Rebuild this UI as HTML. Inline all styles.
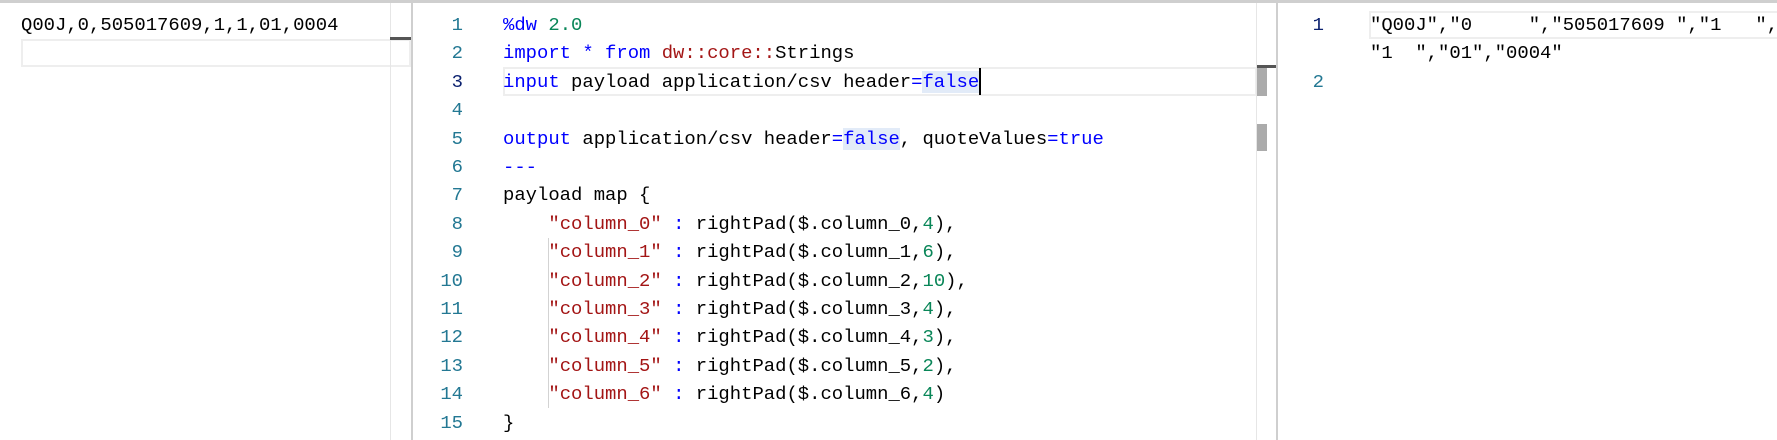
<!DOCTYPE html>
<html><head><meta charset="utf-8"><style>
*{margin:0;padding:0;box-sizing:border-box}
body{width:1777px;height:440px;overflow:hidden;background:#fff;position:relative;font-family:"Liberation Mono","DejaVu Sans Mono",monospace;font-size:18.9px;color:#000}
.a{position:absolute}
.l{position:absolute;height:28.4px;line-height:28.4px;white-space:pre}
.n{position:absolute;height:28.4px;line-height:28.4px;text-align:right;color:#237893;width:60px}
.k{color:#0000ff}.g{color:#098658}.s{color:#a31515}.h{background:#e2ebf8}
</style></head><body>
<div class="a" style="left:0;top:0;width:1777px;height:3px;background:#cfcfcf"></div>
<!-- left pane -->
<div class="l" style="left:21px;top:11px">Q00J,0,505017609,1,1,01,0004</div>
<div class="a" style="left:21px;top:39px;width:390px;height:28px;border:2px solid #eeeeee"></div>
<div class="a" style="left:390px;top:3px;width:1px;height:437px;background:#e6e6e6"></div>
<div class="a" style="left:390px;top:37px;width:21px;height:3px;background:#555"></div>
<div class="a" style="left:411px;top:3px;width:2px;height:437px;background:#cfcfcf"></div>
<!-- middle -->
<div class="a" style="left:503px;top:67px;width:754px;height:29px;border:2px solid #eeeeee"></div>
<div class="a" style="left:548px;top:238px;width:1px;height:170px;background:#d3d3d3"></div>
<div class="n" style="left:403px;top:11px">1</div>
<div class="n" style="left:403px;top:39.4px">2</div>
<div class="n" style="left:403px;top:67.8px;color:#0b216f">3</div>
<div class="n" style="left:403px;top:96.2px">4</div>
<div class="n" style="left:403px;top:124.6px">5</div>
<div class="n" style="left:403px;top:153px">6</div>
<div class="n" style="left:403px;top:181.4px">7</div>
<div class="n" style="left:403px;top:209.8px">8</div>
<div class="n" style="left:403px;top:238.2px">9</div>
<div class="n" style="left:403px;top:266.6px">10</div>
<div class="n" style="left:403px;top:295px">11</div>
<div class="n" style="left:403px;top:323.4px">12</div>
<div class="n" style="left:403px;top:351.8px">13</div>
<div class="n" style="left:403px;top:380.2px">14</div>
<div class="n" style="left:403px;top:408.6px">15</div>
<div class="l" style="left:503px;top:11px"><span class="k">%dw</span> <span class="g">2.0</span></div>
<div class="l" style="left:503px;top:39.4px"><span class="k">import * from</span> <span class="s">dw::core::</span>Strings</div>
<div class="l" style="left:503px;top:67.8px"><span class="k">input</span> payload application/csv header<span class="k">=</span><span class="k h">false</span></div>
<div class="a" style="left:979px;top:68px;width:2px;height:27px;background:#000"></div>
<div class="l" style="left:503px;top:124.6px"><span class="k">output</span> application/csv header<span class="k">=</span><span class="k h">false</span>, quoteValues<span class="k">=true</span></div>
<div class="l" style="left:503px;top:153px"><span class="k">---</span></div>
<div class="l" style="left:503px;top:181.4px">payload map {</div>
<div class="l" style="left:503px;top:209.8px">    <span class="s">"column_0"</span> <span class="k">:</span> rightPad($.column_0,<span class="g">4</span>),</div>
<div class="l" style="left:503px;top:238.2px">    <span class="s">"column_1"</span> <span class="k">:</span> rightPad($.column_1,<span class="g">6</span>),</div>
<div class="l" style="left:503px;top:266.6px">    <span class="s">"column_2"</span> <span class="k">:</span> rightPad($.column_2,<span class="g">10</span>),</div>
<div class="l" style="left:503px;top:295px">    <span class="s">"column_3"</span> <span class="k">:</span> rightPad($.column_3,<span class="g">4</span>),</div>
<div class="l" style="left:503px;top:323.4px">    <span class="s">"column_4"</span> <span class="k">:</span> rightPad($.column_4,<span class="g">3</span>),</div>
<div class="l" style="left:503px;top:351.8px">    <span class="s">"column_5"</span> <span class="k">:</span> rightPad($.column_5,<span class="g">2</span>),</div>
<div class="l" style="left:503px;top:380.2px">    <span class="s">"column_6"</span> <span class="k">:</span> rightPad($.column_6,<span class="g">4</span>)</div>
<div class="l" style="left:503px;top:408.6px">}</div>
<div class="a" style="left:1256px;top:3px;width:1px;height:437px;background:#e6e6e6"></div>
<div class="a" style="left:1257px;top:65px;width:10px;height:31px;background:#ababab"></div>
<div class="a" style="left:1257px;top:65px;width:20px;height:3px;background:#555"></div>
<div class="a" style="left:1257px;top:124px;width:10px;height:27px;background:#ababab"></div>
<div class="a" style="left:1276px;top:3px;width:2px;height:437px;background:#cfcfcf"></div>
<!-- right -->
<div class="a" style="left:1369px;top:11px;width:420px;height:28px;border:2px solid #eeeeee"></div>
<div class="n" style="left:1264px;top:11px;color:#0b216f">1</div>
<div class="n" style="left:1264px;top:67.8px">2</div>
<div class="l" style="left:1370px;top:11px">"Q00J","0     ","505017609 ","1   ",</div>
<div class="l" style="left:1370px;top:39.4px">"1  ","01","0004"</div>
</body></html>
